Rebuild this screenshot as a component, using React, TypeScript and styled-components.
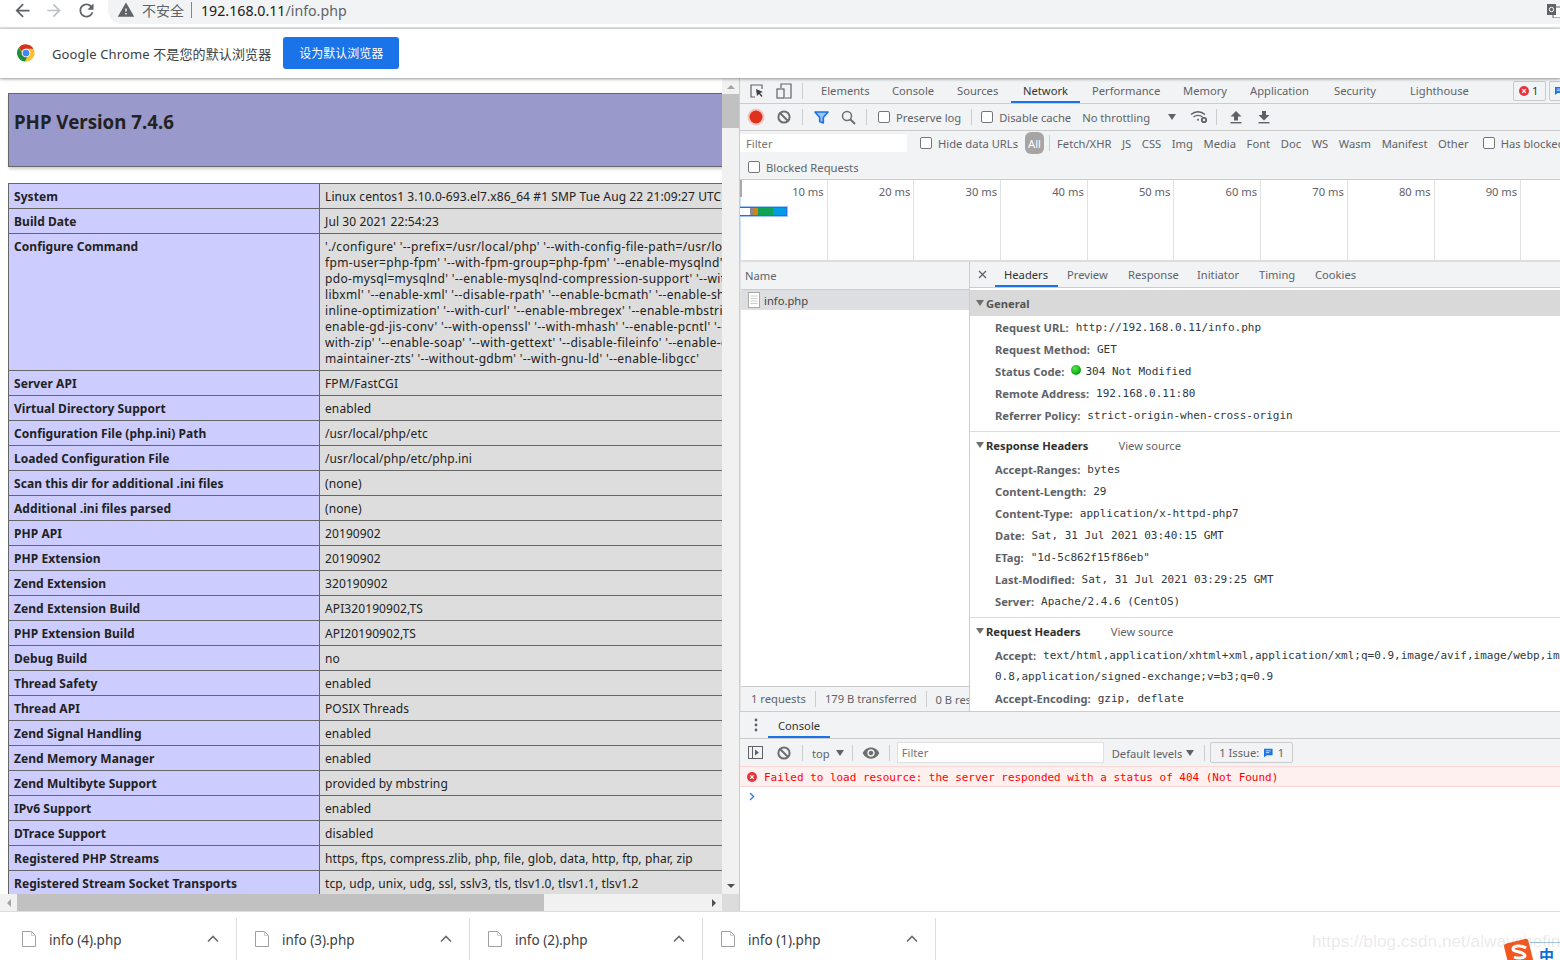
import React from "react";
import styled, { createGlobalStyle } from "styled-components";

const UI_FONT = `"Noto Sans", "Noto Sans CJK SC", sans-serif`;
const MONO_FONT = `"DejaVu Sans Mono", "Liberation Mono", monospace`;

const GlobalStyle = createGlobalStyle`
  html, body {
    margin: 0;
    padding: 0;
    width: 1560px;
    height: 960px;
    overflow: hidden;
    background: #fff;
    font-family: ${UI_FONT};
  }
  * { box-sizing: border-box; }
`;

const Window = styled.div`
  position: relative;
  width: 1560px;
  height: 960px;
  display: flex;
  flex-direction: column;
  overflow: hidden;
`;

/* ---------- browser chrome ---------- */
const Toolbar = styled.div`
  height: 29px;
  flex: none;
  display: flex;
  border-bottom: 2px solid #dfe1e5;
  background: #fff;
`;
const NavButton = styled.div<{ $w: number }>`
  width: ${(p) => p.$w}px;
  height: 20px;
  flex: none;
  display: flex;
  align-items: center;
  justify-content: center;
`;
const Omnibox = styled.div`
  flex: 1;
  height: 24px;
  padding: 0 0 4px 9px;
  display: flex;
  align-items: center;
  background: #f1f3f4;
  border-bottom-left-radius: 14px;
`;
const Insecure = styled.span`
  margin-left: 7px;
  font-size: 14px;
  color: #5f6368;
`;
const UrlDivider = styled.span`
  width: 1px;
  height: 16px;
  margin: 0 9px 0 7px;
  background: #80868b;
`;
const UrlHost = styled.span`
  font-size: 14.2px;
  color: #202124;
`;
const UrlPath = styled.span`
  font-size: 14.2px;
  color: #5f6368;
`;
const TranslateBadge = styled.div`
  margin-left: auto;
  margin-right: -1px;
  display: flex;
`;
const InfoBar = styled.div`
  position: relative;
  z-index: 2;
  height: 49px;
  flex: none;
  padding: 0 0 1px 17px;
  display: flex;
  align-items: center;
  background: #fff;
  box-shadow: 0 1px 3px rgba(60, 64, 67, 0.55);
`;
const InfoText = styled.span`
  margin-left: 17px;
  font-size: 13px;
  letter-spacing: 0.13px;
  color: #3c4043;
`;
const DefaultButton = styled.div`
  width: 116px;
  height: 32px;
  margin-left: 12px;
  display: flex;
  align-items: center;
  justify-content: center;
  border-radius: 3px;
  background: #1a73e8;
  color: #fff;
  font-size: 12px;
`;

const Main = styled.div`
  flex: 1;
  min-height: 0;
  display: flex;
`;

/* ---------- phpinfo page ---------- */
const PagePane = styled.div`
  width: 740px;
  flex: none;
  display: flex;
  flex-direction: column;
  border-right: 1px solid #ccc;
`;
const PageRow = styled.div`
  flex: 1;
  min-height: 0;
  display: flex;
`;
const PageViewport = styled.div`
  width: 722px;
  flex: none;
  overflow: hidden;
  padding: 15px 0 0 8px;
  background: #fff;
  color: #222;
`;
const PhpHead = styled.div`
  width: 934px;
  height: 74px;
  padding: 14px 5px 0;
  border: 1px solid #666;
  background: #99c;
  box-shadow: 1px 2px 3px #ccc;
`;
const PhpTitle = styled.h1`
  margin: 0;
  font-size: 18.7px;
  line-height: 27px;
  font-weight: 700;
  color: #222;
`;
const PhpTable = styled.table`
  width: 934px;
  margin-top: 16px;
  table-layout: fixed;
  border-collapse: collapse;
  font-size: 12px;
  line-height: 16px;
`;
const KeyCell = styled.td`
  width: 311px;
  padding: 5px 5px 3px;
  vertical-align: top;
  border: 1px solid #666;
  background: #ccf;
  font-weight: 700;
  letter-spacing: 0.06px;
  color: #222;
`;
const ValueCell = styled.td<{ $wide?: boolean }>`
  padding: 5px 5px 3px;
  vertical-align: top;
  border: 1px solid #666;
  background: #ddd;
  color: #222;
  letter-spacing: ${(p) => (p.$wide ? 0.33 : 0.1)}px;
  white-space: nowrap;
`;
const VScrollbar = styled.div`
  width: 17px;
  flex: none;
  display: flex;
  flex-direction: column;
  background: #f1f1f1;
`;
const VThumb = styled.div`
  height: 34px;
  margin-top: -1px;
  background: #c1c1c1;
`;
const ScrollArrow = styled.div<{ $dir: "up" | "down" | "left" | "right" }>`
  width: 17px;
  height: 17px;
  flex: none;
  display: flex;
  align-items: center;
  justify-content: center;
  &::after {
    content: "";
    border: 4px solid transparent;
    ${(p) =>
      p.$dir === "up"
        ? "border-bottom: 4px solid #a3a3a3; margin-top: -4px;"
        : p.$dir === "down"
        ? "border-top: 4px solid #505050; margin-top: 4px;"
        : p.$dir === "left"
        ? "border-right: 4px solid #a3a3a3; margin-left: -4px;"
        : "border-left: 4px solid #505050; margin-left: 4px;"}
  }
`;
const Spacer = styled.div`
  flex: 1;
`;
const HScrollbar = styled.div`
  height: 17px;
  flex: none;
  display: flex;
  background: #f1f1f1;
`;
const HThumb = styled.div`
  width: 527px;
  background: #c1c1c1;
`;
const ScrollCorner = styled.div`
  width: 17px;
  background: #dcdcdc;
`;

/* ---------- devtools ---------- */
const Devtools = styled.div`
  flex: 1;
  min-width: 0;
  display: flex;
  flex-direction: column;
  font-size: 11.2px;
  color: #5f6368;
  overflow: hidden;
`;
const GreyBar = styled.div<{ $h: number; $line?: boolean; $pb?: number }>`
  height: ${(p) => p.$h}px;
  flex: none;
  padding-bottom: ${(p) => p.$pb ?? 0}px;
  display: flex;
  align-items: center;
  background: #f1f3f4;
  white-space: nowrap;
  ${(p) => (p.$line ? "border-bottom: 1px solid #ccc;" : "")}
`;
const IconSlot = styled.div<{ $w: number }>`
  width: ${(p) => p.$w}px;
  height: 20px;
  flex: none;
  display: flex;
  align-items: center;
  justify-content: center;
`;
const VDivider = styled.span<{ $ml?: number; $mr?: number }>`
  width: 1px;
  height: 16px;
  flex: none;
  margin-left: ${(p) => p.$ml ?? 0}px;
  margin-right: ${(p) => p.$mr ?? 0}px;
  background: #ccc;
`;
const Tab = styled.div<{ $w: number; $active?: boolean; $pad?: number }>`
  width: ${(p) => p.$w}px;
  height: 100%;
  flex: none;
  padding: 2px 0 0 ${(p) => p.$pad ?? 12}px;
  display: flex;
  align-items: center;
  color: ${(p) => (p.$active ? "#333" : "#5f6368")};
  border-bottom: 2px solid ${(p) => (p.$active ? "#1a73e8" : "transparent")};
`;
const BadgeButton = styled.div`
  height: 20px;
  flex: none;
  padding: 0 5px;
  display: flex;
  align-items: center;
  gap: 3px;
  border: 1px solid #ccc;
  border-radius: 2px;
  color: #333;
`;
const ErrorBadge = styled(BadgeButton)`
  width: 33px;
  margin-left: 32px;
`;
const MessageBadge = styled(BadgeButton)`
  width: 20px;
  margin-left: 3px;
  overflow: hidden;
`;
const Check = styled.span<{ $ml?: number }>`
  width: 12px;
  height: 12px;
  flex: none;
  margin-left: ${(p) => p.$ml ?? 0}px;
  margin-right: 6px;
  background: #fff;
  border: 1px solid #767676;
  border-radius: 2px;
`;
const BarText = styled.span<{ $ml?: number }>`
  flex: none;
  padding-top: 1px;
  margin-left: ${(p) => p.$ml ?? 0}px;
`;
const Caret = styled.span<{ $ml?: number }>`
  flex: none;
  margin-left: ${(p) => p.$ml ?? 0}px;
  border: 4px solid transparent;
  border-bottom: 0;
  border-top: 6px solid #5f6368;
`;
const FilterInput = styled.div`
  width: 167px;
  height: 18px;
  padding-left: 6px;
  flex: none;
  display: flex;
  align-items: center;
  background: #fff;
  color: #757575;
`;
const AllPill = styled.span`
  width: 19px;
  height: 22px;
  margin-left: 7px;
  flex: none;
  display: flex;
  align-items: center;
  justify-content: center;
  border-radius: 6px;
  background: #a5a5a5;
  color: #fff;
`;
const TypeList = styled.div`
  margin-left: 7px;
  padding-top: 1px;
  display: flex;
  flex: none;
  gap: 10.6px;
`;

const Timeline = styled.div`
  position: relative;
  height: 83px;
  flex: none;
  display: grid;
  grid-template-columns: repeat(10, 86.7px);
  background: #fff;
  border-left: 1px solid #cfe0fb;
  border-top: 1px solid #ccc;
  border-bottom: 2px solid #ddd;
`;
const TimelineCell = styled.div`
  padding: 4px 3px 0 0;
  text-align: right;
  border-right: 1px solid #e2e2e2;
  color: #5f6368;
`;
const OverviewMark = styled.div`
  position: absolute;
  left: -1px;
  top: 0;
  width: 2px;
  height: 17px;
  background: #aaa;
`;
const WaterfallBar = styled.div`
  position: absolute;
  left: -1px;
  top: 27px;
  width: 47px;
  height: 9px;
  display: flex;
  border: 1px solid #1a73e8;
  border-left: 0;
  box-shadow: 0 0 0 1px #9cc3f7;
`;
const WaterfallPart = styled.span<{ $c: string; $w: number }>`
  width: ${(p) => p.$w}px;
  background: ${(p) => p.$c};
`;

const Split = styled.div`
  flex: 1;
  min-height: 0;
  display: flex;
  border-bottom: 1px solid #ccc;
`;
const NamePane = styled.div`
  width: 230px;
  flex: none;
  display: flex;
  flex-direction: column;
  border-right: 1px solid #ccc;
  border-left: 1px solid #e6e6e6;
`;
const NameHead = styled.div`
  height: 28px;
  flex: none;
  padding-left: 4px;
  display: flex;
  align-items: center;
  background: #f1f3f4;
  border-bottom: 1px solid #ccc;
`;
const NameRow = styled.div`
  height: 20px;
  flex: none;
  padding-left: 7px;
  display: flex;
  align-items: center;
  gap: 4px;
  background: #dcdee1;
  color: #444;
`;
const StatusBar = styled.div`
  height: 25px;
  margin-top: auto;
  flex: none;
  padding-left: 10px;
  display: flex;
  align-items: center;
  overflow: hidden;
  white-space: nowrap;
  background: #f1f3f4;
  border-top: 1px solid #ccc;
  color: #5f6368;
`;
const StatusItem = styled.span`
  flex: none;
  padding-right: 9px;
  margin-right: 9px;
  border-right: 1px solid #ccc;
  line-height: 16px;
`;
const Details = styled.div`
  flex: 1;
  min-width: 0;
  overflow: hidden;
  background: #fff;
`;
const DetailTabs = styled.div`
  height: 26px;
  display: flex;
  align-items: center;
  background: #f1f3f4;
  border-bottom: 1px solid #ccc;
  white-space: nowrap;
`;
const GapRow = styled.div`
  height: 2px;
`;
const CloseIcon = styled.div`
  width: 25px;
  flex: none;
  display: flex;
  justify-content: center;
`;
const Section = styled.section<{ $last?: boolean }>`
  padding-bottom: 5px;
  ${(p) => (p.$last ? "" : "border-bottom: 1px solid #ddd;")}
`;
const SectionHead = styled.div<{ $shaded?: boolean }>`
  height: 26px;
  padding-left: 6px;
  display: flex;
  align-items: center;
  font-weight: 700;
  color: ${(p) => (p.$shaded ? "#555" : "#303030")};
  background: ${(p) => (p.$shaded ? "#d9d9d9" : "#fff")};
`;
const SectionArrow = styled.span`
  margin-right: 2px;
  border: 4px solid transparent;
  border-bottom: 0;
  border-top: 6px solid #6e6e6e;
`;
const ViewSource = styled.span<{ $ml: number }>`
  margin-left: ${(p) => p.$ml}px;
  font-weight: 400;
  color: #5f6368;
`;
const HeaderRow = styled.div<{ $tight?: boolean }>`
  height: ${(p) => (p.$tight ? 21 : 22)}px;
  padding-left: 25px;
  display: flex;
  align-items: center;
  white-space: nowrap;
`;
const HeaderName = styled.span`
  margin-right: 7px;
  font-weight: 700;
  color: #5f6368;
`;
const HeaderValue = styled.span`
  font-family: ${MONO_FONT};
  font-size: 11px;
  color: #303942;
`;
const StatusDot = styled.span`
  width: 10px;
  height: 10px;
  flex: none;
  margin-right: 4px;
  margin-top: -2px;
  border-radius: 50%;
  background: radial-gradient(circle at 40% 35%, #5be35b, #0ba80b 65%);
`;

const Drawer = styled.div`
  height: 199px;
  flex: none;
  display: flex;
  flex-direction: column;
  background: #fff;
`;
const ConsoleFilter = styled.div`
  width: 207px;
  height: 21px;
  margin-left: 7px;
  padding-left: 4px;
  flex: none;
  display: flex;
  align-items: center;
  background: #fff;
  border: 1px solid #e0e0e0;
  color: #757575;
`;
const IssueButton = styled(BadgeButton)`
  width: 83px;
  height: 21px;
  margin-left: 5px;
  padding: 0 8px;
  gap: 5px;
  color: #5f6368;
`;
const ErrorLine = styled.div`
  height: 21px;
  flex: none;
  padding: 1px 0 0 7px;
  display: flex;
  align-items: center;
  gap: 7px;
  background: #fff0f0;
  border-top: 1px solid #ffd6d6;
  border-bottom: 1px solid #ffd6d6;
  font-family: ${MONO_FONT};
  font-size: 11px;
  letter-spacing: -0.03px;
  color: #f00;
  white-space: nowrap;
`;
const PromptLine = styled.div`
  height: 18px;
  padding-left: 9px;
  display: flex;
  align-items: center;
`;

/* ---------- downloads shelf ---------- */
const Shelf = styled.div`
  height: 49px;
  flex: none;
  padding-top: 6px;
  display: flex;
  background: #fff;
  border-top: 1px solid #ddd;
`;
const ShelfItem = styled.div`
  width: 233px;
  flex: none;
  padding: 0 17px 0 18px;
  display: flex;
  align-items: center;
  border-right: 1px solid #ddd;
  &:first-child {
    width: 237px;
    padding-left: 22px;
  }
`;
const ShelfName = styled.span`
  flex: 1;
  margin-left: 13px;
  padding-top: 1px;
  font-size: 13.5px;
  color: #3c4043;
`;
const ImeLogo = styled.div`
  position: absolute;
  left: 1502px;
  top: 937px;
  display: flex;
`;
const Watermark = styled.div`
  position: absolute;
  left: 1312px;
  top: 931px;
  font-family: "Liberation Sans", Arial, sans-serif;
  font-size: 17.2px;
  line-height: 20px;
  color: rgba(120, 120, 120, 0.17);
  white-space: nowrap;
`;
const ImeLine = styled.div`
  position: absolute;
  left: 1530px;
  top: 942px;
  width: 30px;
  height: 1px;
  background: #a9c7ee;
`;
const ImeGlyph = styled.div`
  position: absolute;
  left: 1539px;
  top: 945px;
  font-family: "Noto Sans CJK SC", sans-serif;
  font-size: 15px;
  line-height: 20px;
  font-weight: 700;
  color: #0a6fd8;
`;

/* ---------- drawings ---------- */
const Mi = ({ d, size = 21, color = "#5f6368" }: { d: string; size?: number; color?: string }) => (
  <svg width={size} height={size} viewBox="0 0 24 24" fill={color}>
    <path d={d} />
  </svg>
);
const ARROW = "M20 11H7.83l5.59-5.59L12 4l-8 8 8 8 1.41-1.41L7.83 13H20v-2z";
const ARROW_R = "M4 11h12.17l-5.59-5.59L12 4l8 8-8 8-1.41-1.41L16.17 13H4v-2z";
const RELOAD =
  "M17.65 6.35C16.2 4.9 14.21 4 12 4c-4.42 0-7.99 3.58-7.99 8s3.57 8 7.99 8c3.73 0 6.84-2.55 7.73-6h-2.08c-.82 2.33-3.04 4-5.65 4-3.31 0-6-2.69-6-6s2.69-6 6-6c1.66 0 3.14.69 4.22 1.78L13 11h7V4l-2.35 2.35z";
const WARN = "M1 21h22L12 2 1 21zm12-3h-2v-2h2v2zm0-4h-2v-4h2v4z";
const EYE =
  "M12 4.5C7 4.5 2.73 7.61 1 12c1.73 4.39 6 7.5 11 7.5s9.27-3.11 11-7.5c-1.73-4.39-6-7.5-11-7.5zM12 17c-2.76 0-5-2.24-5-5s2.24-5 5-5 5 2.24 5 5-2.24 5-5 5zm0-8c-1.66 0-3 1.34-3 3s1.34 3 3 3 3-1.34 3-3-1.34-3-3-3z";

const ChromeLogo = () => (
  <svg width="18" height="18" viewBox="0 0 48 48">
    <circle cx="24" cy="24" r="23" fill="#fbc02d" />
    <path d="M24 1a23 23 0 0 1 19.9 11.5H24a11.5 11.5 0 0 0-10.8 7.6L5.3 9.5A23 23 0 0 1 24 1z" fill="#d93025" />
    <path d="M5.3 9.5l10.5 18.3A11.5 11.5 0 0 0 27 35l-6.1 11.8A23 23 0 0 1 5.3 9.5z" fill="#1e8e3e" />
    <circle cx="24" cy="24" r="11.5" fill="#fff" />
    <circle cx="24" cy="24" r="9" fill="#4285f4" />
  </svg>
);
const TranslateIcon = () => (
  <svg width="14" height="16" viewBox="0 0 14 16">
    <rect x="6" y="5" width="8" height="11" fill="#fff" stroke="#5f6368" />
    <rect x="0" y="2" width="9" height="11" fill="#5f6368" />
    <circle cx="4.5" cy="7.5" r="2.2" fill="none" stroke="#fff" />
  </svg>
);
const InspectIcon = () => (
  <svg width="16" height="16" viewBox="0 0 16 16" fill="none">
    <path d="M6 14H2V2h11v4" stroke="#5f6368" strokeWidth="1.2" />
    <path d="M7 6l7 3-3 1 2.5 3-1 1-2.5-3-2 2z" fill="#3c4043" />
  </svg>
);
const DeviceIcon = () => (
  <svg width="16" height="16" viewBox="0 0 16 16" fill="none" stroke="#5f6368" strokeWidth="1.2">
    <path d="M5 5V1h10v14H9" />
    <rect x="1" y="6" width="7" height="9" />
  </svg>
);
const BanIcon = () => (
  <svg width="14" height="14" viewBox="0 0 14 14" fill="none" stroke="#6e6e6e" strokeWidth="2">
    <circle cx="7" cy="7" r="5.6" />
    <path d="M3 3l8 8" />
  </svg>
);
const RecordIcon = () => (
  <svg width="18" height="18" viewBox="0 0 18 18">
    <circle cx="9" cy="9" r="8.5" fill="#f5c6c2" />
    <circle cx="9" cy="9" r="6.5" fill="#e0301e" />
  </svg>
);
const FunnelIcon = () => (
  <svg width="15" height="13" viewBox="0 0 15 13">
    <path d="M1 1h13L9.3 6.6V12l-3.6-1.5V6.6z" fill="#9cc5f5" stroke="#1a73e8" strokeWidth="1.6" strokeLinejoin="round" />
  </svg>
);
const SearchIcon = () => (
  <svg width="15" height="15" viewBox="0 0 15 15" fill="none" stroke="#6e6e6e" strokeWidth="1.5">
    <circle cx="6" cy="6" r="4.5" />
    <path d="M9.5 9.5l4.5 4.5" strokeWidth="2" />
  </svg>
);
const WifiGearIcon = () => (
  <svg width="18" height="14" viewBox="0 0 18 14" fill="none" stroke="#5f6368" strokeWidth="1.4">
    <path d="M1 4.5C5 .8 11 .8 15 4.5" />
    <path d="M3.5 7C6 4.8 10 4.8 12.5 7" />
    <circle cx="8" cy="9.8" r="1" fill="#5f6368" stroke="none" />
    <circle cx="14" cy="10" r="2.2" strokeWidth="1.8" />
  </svg>
);
const TransferIcon = ({ down }: { down?: boolean }) => (
  <svg width="12" height="13" viewBox="0 0 12 13" fill="#5f6368">
    {down ? <path d="M4 0h4v4h3.5L6 9.5.5 4H4z" /> : <path d="M6 0l5.5 5.5H8v4H4v-4H.5z" />}
    <rect x="0.5" y="11" width="11" height="1.4" />
  </svg>
);
const ErrorDot = ({ size = 10 }: { size?: number }) => (
  <svg width={size} height={size} viewBox="0 0 10 10">
    <circle cx="5" cy="5" r="5" fill="#e8323c" />
    <path d="M3.2 3.2l3.6 3.6M6.8 3.2L3.2 6.8" stroke="#fff" strokeWidth="1.2" />
  </svg>
);
const MessageIcon = () => (
  <svg width="12" height="12" viewBox="0 0 12 12">
    <path d="M0 0h12v9H4l-4 3z" fill="#1a73e8" />
    <path d="M2.5 3h7M2.5 5.5h5" stroke="#fff" />
  </svg>
);
const DotsIcon = () => (
  <svg width="8" height="14" viewBox="0 0 8 14" fill="#5f6368">
    <circle cx="6" cy="2" r="1.4" />
    <circle cx="6" cy="7" r="1.4" />
    <circle cx="6" cy="12" r="1.4" />
  </svg>
);
const SidebarIcon = () => (
  <svg width="15" height="13" viewBox="0 0 15 13" fill="none" stroke="#5f6368">
    <rect x="0.5" y="0.5" width="14" height="12" />
    <path d="M4.5 0.5v12" />
    <path d="M7 3.5l4 3-4 3z" fill="#5f6368" stroke="none" />
  </svg>
);
const FileSmall = () => (
  <svg width="12" height="16" viewBox="0 0 12 16" fill="#fff" stroke="#aaa">
    <rect x="0.5" y="0.5" width="11" height="15" />
    <path d="M2.5 4h7M2.5 6.5h7M2.5 9h7M2.5 11.5h7" stroke="#ccc" />
  </svg>
);
const FileBig = () => (
  <svg width="14" height="16" viewBox="0 0 14 16" fill="#fff" stroke="#a0a0a0">
    <path d="M.5.5h9l4 4v11H.5z" />
    <path d="M9.5.5v4h4" fill="none" stroke="#ccc" />
  </svg>
);
const ChevronUp = () => (
  <svg width="12" height="8" viewBox="0 0 12 8" fill="none" stroke="#6b6b6b" strokeWidth="1.6">
    <path d="M1 6.5l5-5 5 5" />
  </svg>
);
const CloseX = () => (
  <svg width="9" height="9" viewBox="0 0 9 9" stroke="#5f6368" strokeWidth="1.3">
    <path d="M1 1l7 7M8 1L1 8" />
  </svg>
);
const PromptIcon = () => (
  <svg width="6" height="9" viewBox="0 0 6 9" fill="none" stroke="#367cf1" strokeWidth="1.4">
    <path d="M1 1l3.5 3.5L1 8" />
  </svg>
);
const SogouLogo = () => (
  <svg width="34" height="26" viewBox="0 0 34 26">
    <rect x="4" y="4" width="25" height="28" rx="3" fill="#f4571f" transform="rotate(-14 16 16)" />
    <path d="M24 11c-4-3-12-2.500-13 .5-1 4 12 2.500 12 7.500-1 2-7 3-11 1" fill="none" stroke="#fff" strokeWidth="3" />
  </svg>
);

/* ---------- data ---------- */
const CONFIGURE = [
  "'./configure' '--prefix=/usr/local/php' '--with-config-file-path=/usr/local/php/etc' '--enable-",
  "fpm-user=php-fpm' '--with-fpm-group=php-fpm' '--enable-mysqlnd' '--with-mysqli=mysqlnd' '--with-",
  "pdo-mysql=mysqlnd' '--enable-mysqlnd-compression-support' '--with-iconv-dir' '--with-",
  "libxml' '--enable-xml' '--disable-rpath' '--enable-bcmath' '--enable-shmop' '--enable-",
  "inline-optimization' '--with-curl' '--enable-mbregex' '--enable-mbstring' '--enable-",
  "enable-gd-jis-conv' '--with-openssl' '--with-mhash' '--enable-pcntl' '--enable-sockets' '--",
  "with-zip' '--enable-soap' '--with-gettext' '--disable-fileinfo' '--enable-opcache' '--enable-",
  "maintainer-zts' '--without-gdbm' '--with-gnu-ld' '--enable-libgcc'",
];
const ROWS: [string, string][] = [
  ["Server API", "FPM/FastCGI"],
  ["Virtual Directory Support", "enabled"],
  ["Configuration File (php.ini) Path", "/usr/local/php/etc"],
  ["Loaded Configuration File", "/usr/local/php/etc/php.ini"],
  ["Scan this dir for additional .ini files", "(none)"],
  ["Additional .ini files parsed", "(none)"],
  ["PHP API", "20190902"],
  ["PHP Extension", "20190902"],
  ["Zend Extension", "320190902"],
  ["Zend Extension Build", "API320190902,TS"],
  ["PHP Extension Build", "API20190902,TS"],
  ["Debug Build", "no"],
  ["Thread Safety", "enabled"],
  ["Thread API", "POSIX Threads"],
  ["Zend Signal Handling", "enabled"],
  ["Zend Memory Manager", "enabled"],
  ["Zend Multibyte Support", "provided by mbstring"],
  ["IPv6 Support", "enabled"],
  ["DTrace Support", "disabled"],
  ["Registered PHP Streams", "https, ftps, compress.zlib, php, file, glob, data, http, ftp, phar, zip"],
  ["Registered Stream Socket Transports", "tcp, udp, unix, udg, ssl, sslv3, tls, tlsv1.0, tlsv1.1, tlsv1.2"],
];
const MAIN_TABS: [string, number][] = [
  ["Elements", 71],
  ["Console", 65],
  ["Sources", 66],
  ["Network", 69],
  ["Performance", 91],
  ["Memory", 67],
  ["Application", 84],
  ["Security", 76],
  ["Lighthouse", 83],
];
const TYPES = ["Fetch/XHR", "JS", "CSS", "Img", "Media", "Font", "Doc", "WS", "Wasm", "Manifest", "Other"];
const DETAIL_TABS: [string, number][] = [
  ["Headers", 63],
  ["Preview", 61],
  ["Response", 69],
  ["Initiator", 62],
  ["Timing", 56],
  ["Cookies", 70],
];
const GENERAL: [string, string][] = [
  ["Request URL:", "http://192.168.0.11/info.php"],
  ["Request Method:", "GET"],
  ["Status Code:", "304 Not Modified"],
  ["Remote Address:", "192.168.0.11:80"],
  ["Referrer Policy:", "strict-origin-when-cross-origin"],
];
const RESPONSE: [string, string][] = [
  ["Accept-Ranges:", "bytes"],
  ["Content-Length:", "29"],
  ["Content-Type:", "application/x-httpd-php7"],
  ["Date:", "Sat, 31 Jul 2021 03:40:15 GMT"],
  ["ETag:", '"1d-5c862f15f86eb"'],
  ["Last-Modified:", "Sat, 31 Jul 2021 03:29:25 GMT"],
  ["Server:", "Apache/2.4.6 (CentOS)"],
];
const DOWNLOADS = ["info (4).php", "info (3).php", "info (2).php", "info (1).php"];

const HeaderLines = ({ rows }: { rows: [string, string][] }) => (
  <>
    {rows.map(([name, value]) => (
      <HeaderRow key={name}>
        <HeaderName>{name}</HeaderName>
        {name === "Status Code:" && <StatusDot />}
        <HeaderValue>{value}</HeaderValue>
      </HeaderRow>
    ))}
  </>
);

const PhpPage = () => (
  <PagePane>
    <PageRow>
      <PageViewport>
        <PhpHead>
          <PhpTitle>PHP Version 7.4.6</PhpTitle>
        </PhpHead>
        <PhpTable>
          <tbody>
            <tr>
              <KeyCell>System</KeyCell>
              <ValueCell>Linux centos1 3.10.0-693.el7.x86_64 #1 SMP Tue Aug 22 21:09:27 UTC 2017 x86_64</ValueCell>
            </tr>
            <tr>
              <KeyCell>Build Date</KeyCell>
              <ValueCell>Jul 30 2021 22:54:23</ValueCell>
            </tr>
            <tr>
              <KeyCell>Configure Command</KeyCell>
              <ValueCell $wide>
                {CONFIGURE.map((line) => (
                  <div key={line}>{line}</div>
                ))}
              </ValueCell>
            </tr>
            {ROWS.map(([key, value]) => (
              <tr key={key}>
                <KeyCell>{key}</KeyCell>
                <ValueCell>{value}</ValueCell>
              </tr>
            ))}
          </tbody>
        </PhpTable>
      </PageViewport>
      <VScrollbar>
        <ScrollArrow $dir="up" />
        <VThumb />
        <Spacer />
        <ScrollArrow $dir="down" />
      </VScrollbar>
    </PageRow>
    <HScrollbar>
      <ScrollArrow $dir="left" />
      <HThumb />
      <Spacer />
      <ScrollArrow $dir="right" />
      <ScrollCorner />
    </HScrollbar>
  </PagePane>
);

const NetworkPanel = () => (
  <>
    <GreyBar $h={26} $line>
      <IconSlot $w={33}>
        <InspectIcon />
      </IconSlot>
      <IconSlot $w={22}>
        <DeviceIcon />
      </IconSlot>
      <VDivider $ml={7} $mr={6} />
      {MAIN_TABS.map(([label, w]) => (
        <Tab key={label} $w={w} $active={label === "Network"}>
          {label}
        </Tab>
      ))}
      <ErrorBadge>
        <ErrorDot />1
      </ErrorBadge>
      <MessageBadge>
        <MessageIcon />
      </MessageBadge>
    </GreyBar>
    <GreyBar $h={27} $line>
      <IconSlot $w={31}>
        <RecordIcon />
      </IconSlot>
      <IconSlot $w={25}>
        <BanIcon />
      </IconSlot>
      <VDivider $ml={6} />
      <IconSlot $w={37}>
        <FunnelIcon />
      </IconSlot>
      <IconSlot $w={16}>
        <SearchIcon />
      </IconSlot>
      <VDivider $ml={10} />
      <Check $ml={11} />
      <BarText>Preserve log</BarText>
      <VDivider $ml={10} />
      <Check $ml={9} />
      <BarText>Disable cache</BarText>
      <BarText $ml={11}>No throttling</BarText>
      <Caret $ml={18} />
      <IconSlot $w={46}>
        <WifiGearIcon />
      </IconSlot>
      <VDivider $ml={-6} />
      <IconSlot $w={37}>
        <TransferIcon />
      </IconSlot>
      <IconSlot $w={19}>
        <TransferIcon down />
      </IconSlot>
    </GreyBar>
    <GreyBar $h={25} $pb={1}>
      <FilterInput>Filter</FilterInput>
      <Check $ml={13} />
      <BarText>Hide data URLs</BarText>
      <AllPill>All</AllPill>
      <VDivider $ml={5} />
      <TypeList>
        {TYPES.map((t) => (
          <span key={t}>{t}</span>
        ))}
      </TypeList>
      <Check $ml={14} />
      <BarText>Has blocked cookies</BarText>
    </GreyBar>
    <GreyBar $h={23} $pb={2}>
      <Check $ml={8} />
      <BarText>Blocked Requests</BarText>
    </GreyBar>
    <Timeline>
      {[10, 20, 30, 40, 50, 60, 70, 80, 90, 100].map((n) => (
        <TimelineCell key={n}>{n} ms</TimelineCell>
      ))}
      <OverviewMark />
      <WaterfallBar>
        <WaterfallPart $c="#fff" $w={10} />
        <WaterfallPart $c="#8a8a8a" $w={4} />
        <WaterfallPart $c="#d2841c" $w={4} />
        <WaterfallPart $c="#0da555" $w={15} />
        <WaterfallPart $c="#039be5" $w={13} />
      </WaterfallBar>
    </Timeline>
    <Split>
      <NamePane>
        <NameHead>Name</NameHead>
        <NameRow>
          <FileSmall />
          info.php
        </NameRow>
        <StatusBar>
          <StatusItem>1 requests</StatusItem>
          <StatusItem>179 B transferred</StatusItem>
          <span>0 B resources</span>
        </StatusBar>
      </NamePane>
      <Details>
        <DetailTabs>
          <CloseIcon>
            <CloseX />
          </CloseIcon>
          {DETAIL_TABS.map(([label, w]) => (
            <Tab key={label} $w={w} $active={label === "Headers"} $pad={9}>
              {label}
            </Tab>
          ))}
        </DetailTabs>
        <GapRow />
        <Section>
          <SectionHead $shaded>
            <SectionArrow />
            General
          </SectionHead>
          <HeaderLines rows={GENERAL} />
        </Section>
        <Section>
          <SectionHead>
            <SectionArrow />
            Response Headers
            <ViewSource $ml={30}>View source</ViewSource>
          </SectionHead>
          <HeaderLines rows={RESPONSE} />
        </Section>
        <Section $last>
          <SectionHead>
            <SectionArrow />
            Request Headers
            <ViewSource $ml={30}>View source</ViewSource>
          </SectionHead>
          <HeaderRow>
            <HeaderName>Accept:</HeaderName>
            <HeaderValue>
              text/html,application/xhtml+xml,application/xml;q=0.9,image/avif,image/webp,image/apng,*/*;q=
            </HeaderValue>
          </HeaderRow>
          <HeaderRow $tight>
            <HeaderValue>0.8,application/signed-exchange;v=b3;q=0.9</HeaderValue>
          </HeaderRow>
          <HeaderRow>
            <HeaderName>Accept-Encoding:</HeaderName>
            <HeaderValue>gzip, deflate</HeaderValue>
          </HeaderRow>
        </Section>
      </Details>
    </Split>
  </>
);

const ConsoleDrawer = () => (
  <Drawer>
    <GreyBar $h={27} $line>
      <IconSlot $w={28}>
        <DotsIcon />
      </IconSlot>
      <Tab $w={62} $active $pad={10}>
        Console
      </Tab>
    </GreyBar>
    <GreyBar $h={27}>
      <IconSlot $w={30}>
        <SidebarIcon />
      </IconSlot>
      <IconSlot $w={28}>
        <BanIcon />
      </IconSlot>
      <VDivider $ml={4} />
      <BarText $ml={9}>top</BarText>
      <Caret $ml={6} />
      <VDivider $ml={8} />
      <IconSlot $w={36}>
        <Mi d={EYE} size={18} color="#6e6e6e" />
      </IconSlot>
      <VDivider />
      <ConsoleFilter>Filter</ConsoleFilter>
      <BarText $ml={8}>Default levels</BarText>
      <Caret $ml={4} />
      <VDivider $ml={10} />
      <IssueButton>
        1 Issue:
        <MessageIcon />1
      </IssueButton>
    </GreyBar>
    <ErrorLine>
      <ErrorDot />
      Failed to load resource: the server responded with a status of 404 (Not Found)
    </ErrorLine>
    <PromptLine>
      <PromptIcon />
    </PromptLine>
  </Drawer>
);

export default function App() {
  return (
    <Window>
      <GlobalStyle />
      <Toolbar>
        <NavButton $w={44}>
          <Mi d={ARROW} />
        </NavButton>
        <NavButton $w={20}>
          <Mi d={ARROW_R} color="#bdc1c6" />
        </NavButton>
        <NavButton $w={44}>
          <Mi d={RELOAD} />
        </NavButton>
        <Omnibox>
          <Mi d={WARN} size={18} />
          <Insecure>不安全</Insecure>
          <UrlDivider />
          <UrlHost>192.168.0.11</UrlHost>
          <UrlPath>/info.php</UrlPath>
          <TranslateBadge>
            <TranslateIcon />
          </TranslateBadge>
        </Omnibox>
      </Toolbar>
      <InfoBar>
        <ChromeLogo />
        <InfoText>Google Chrome 不是您的默认浏览器</InfoText>
        <DefaultButton>设为默认浏览器</DefaultButton>
      </InfoBar>
      <Main>
        <PhpPage />
        <Devtools>
          <NetworkPanel />
          <ConsoleDrawer />
        </Devtools>
      </Main>
      <Shelf>
        {DOWNLOADS.map((name) => (
          <ShelfItem key={name}>
            <FileBig />
            <ShelfName>{name}</ShelfName>
            <ChevronUp />
          </ShelfItem>
        ))}
      </Shelf>
      <ImeLine />
      <ImeLogo>
        <SogouLogo />
      </ImeLogo>
      <Watermark>https://blog.csdn.net/alwaysbefine</Watermark>
      <ImeGlyph>中</ImeGlyph>
    </Window>
  );
}
